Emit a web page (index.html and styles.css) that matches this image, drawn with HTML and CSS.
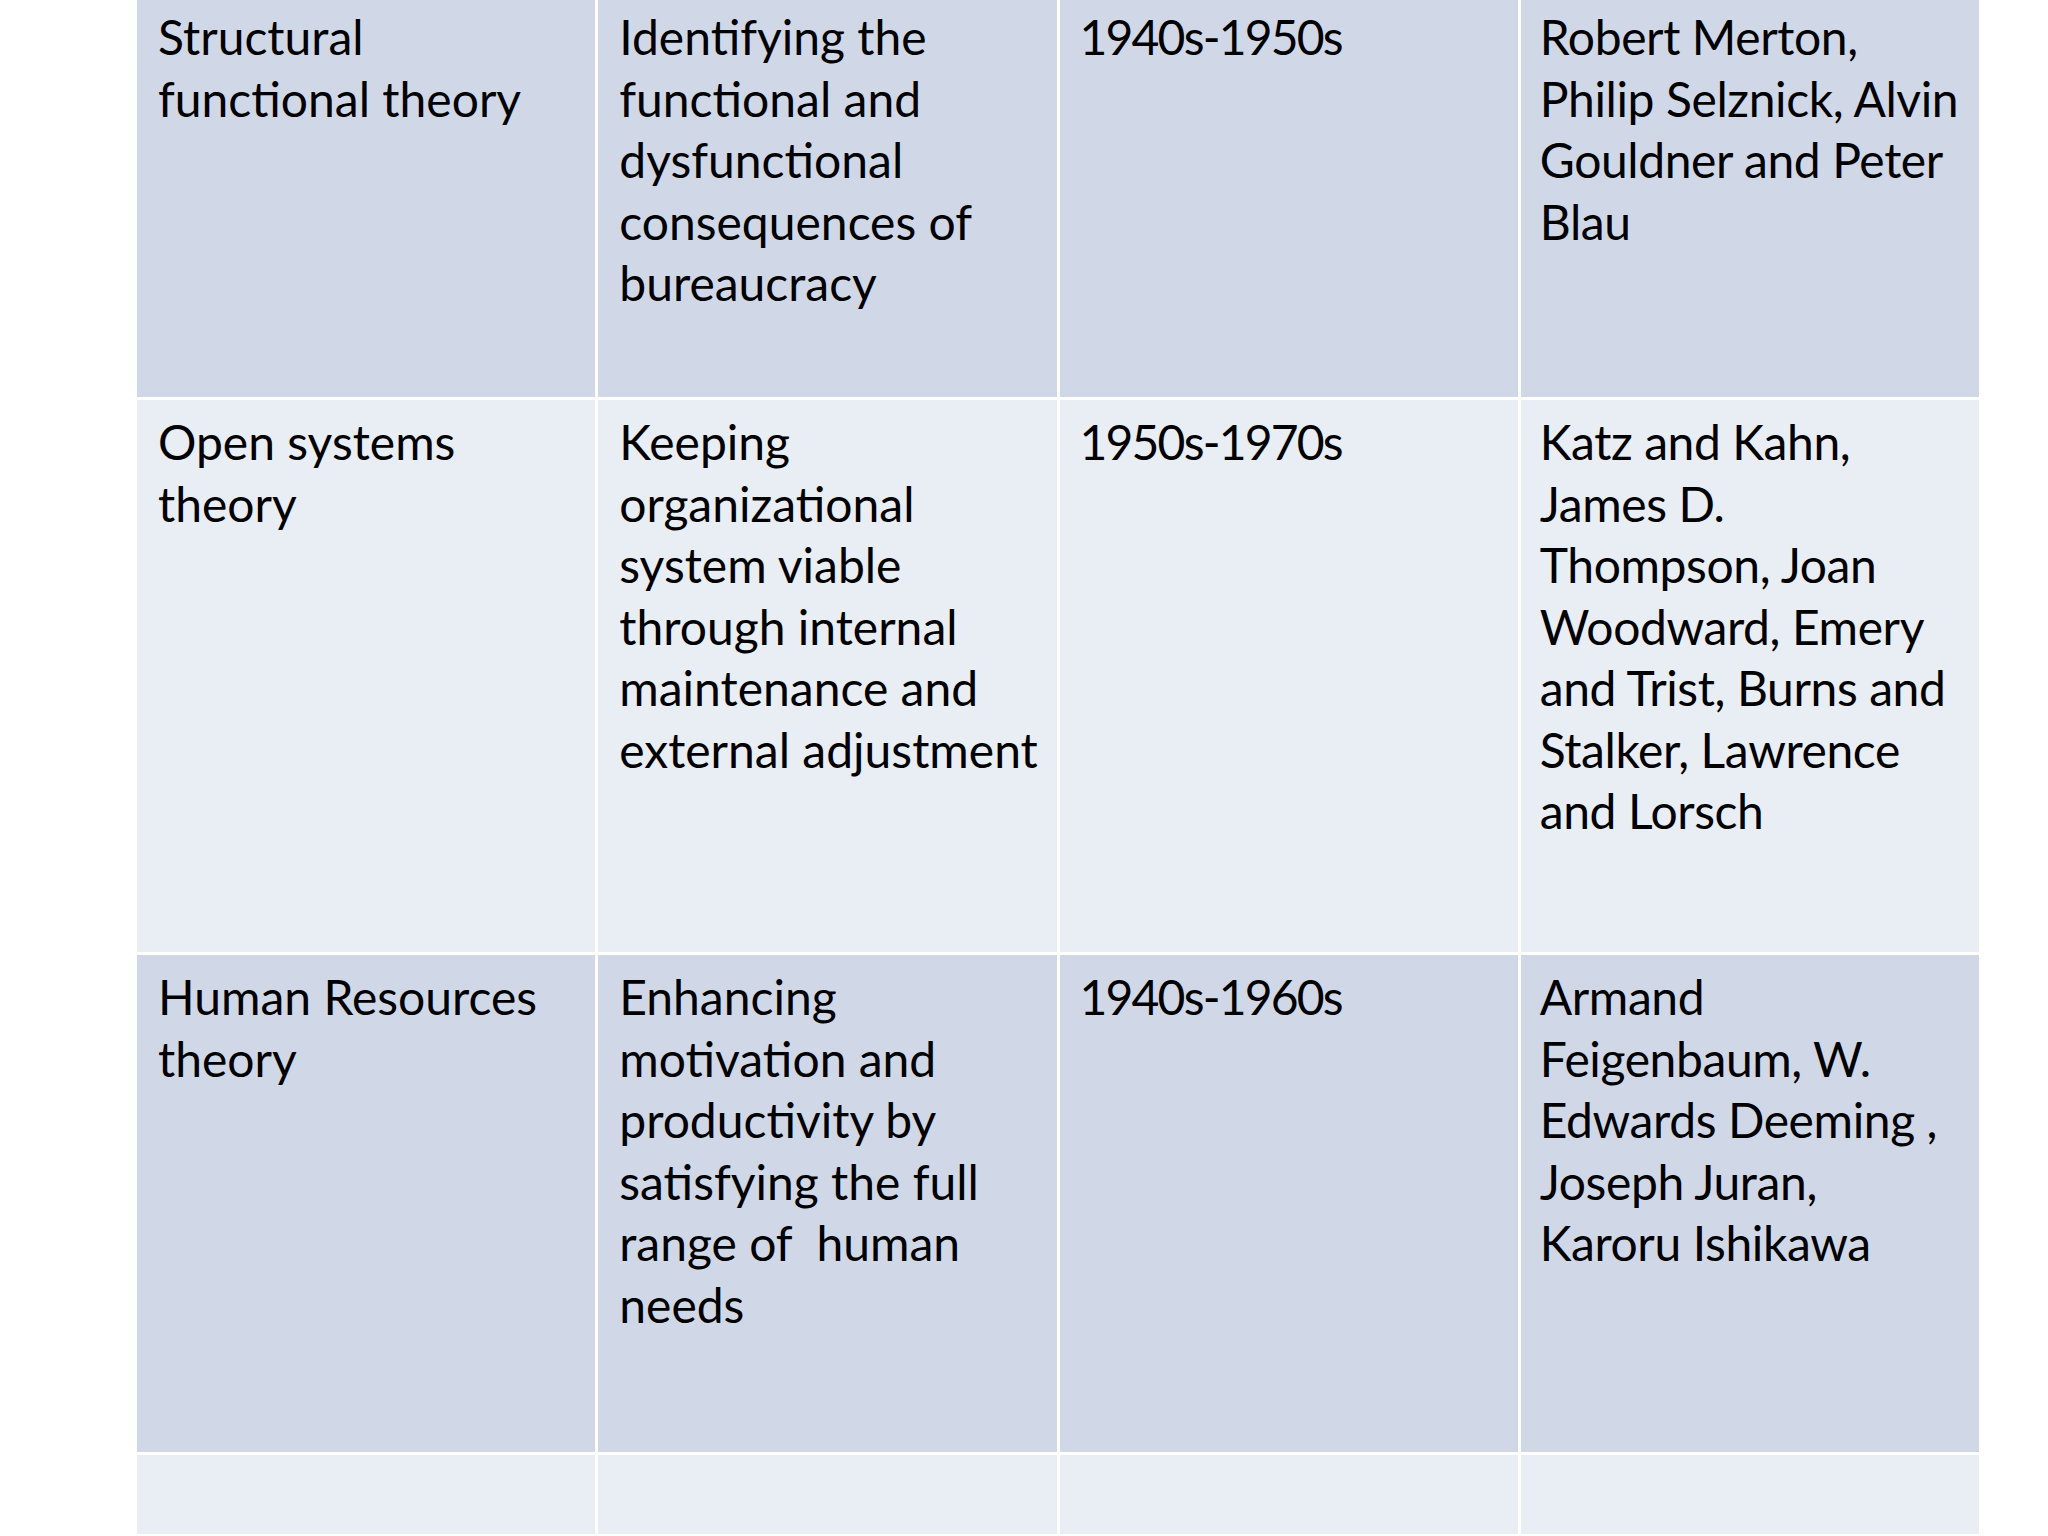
FILE: index.html
```html
<!DOCTYPE html>
<html lang="en">
<head>
<meta charset="utf-8">
<title>Organization theories</title>
<link rel="stylesheet" href="styles.css">
</head>
<body>
<div class="page">
  <div class="table">
    <div class="cell dark">Structural<br>functional theory</div>
    <div class="cell dark">Identifying the<br>functional and<br>dysfunctional<br>consequences of<br>bureaucracy</div>
    <div class="cell dark date">1940s-1950s</div>
    <div class="cell dark names">Robert Merton,<br>Philip Selznick, Alvin<br>Gouldner and Peter<br>Blau</div>

    <div class="cell light">Open systems<br>theory</div>
    <div class="cell light">Keeping<br>organizational<br>system viable<br>through internal<br>maintenance and<br>external adjustment</div>
    <div class="cell light date">1950s-1970s</div>
    <div class="cell light names">Katz and Kahn,<br>James D.<br>Thompson, Joan<br>Woodward, Emery<br>and Trist, Burns and<br>Stalker, Lawrence<br>and Lorsch</div>

    <div class="cell dark">Human Resources<br>theory</div>
    <div class="cell dark">Enhancing<br>motivation and<br>productivity by<br>satisfying the full<br>range of&nbsp; human<br>needs</div>
    <div class="cell dark date">1940s-1960s</div>
    <div class="cell dark names">Armand<br>Feigenbaum, W.<br>Edwards Deeming ,<br>Joseph Juran,<br>Karoru Ishikawa</div>

    <div class="cell light"></div>
    <div class="cell light"></div>
    <div class="cell light"></div>
    <div class="cell light"></div>
  </div>
</div>
</body>
</html>
```

FILE: styles.css
```css
html, body {
  margin: 0;
  padding: 0;
  background: #ffffff;
}

.page {
  width: 2048px;
  height: 1536px;
  overflow: hidden;
  padding-left: 137px;
  box-sizing: border-box;
}

.table {
  margin-top: -5px;
  width: 1842px;
  display: grid;
  grid-template-columns: repeat(4, minmax(0, 1fr));
  grid-template-rows: 402px 552px 497px 79px;
  gap: 3px;
  background: #ffffff;
  font-family: Lato, "Open Sans", sans-serif;
  font-size: 48px;
  line-height: 61.5px;
  color: #000000;
}

.cell {
  padding: 11px 12px 0 21px;
  white-space: nowrap;
}

.date {
  letter-spacing: -1.8px;
  padding-left: 20px;
}

.names {
  letter-spacing: -0.4px;
  padding-left: 19px;
}

.dark {
  background: #d0d8e8;
}

.light {
  background: #e9edf4;
}
```
